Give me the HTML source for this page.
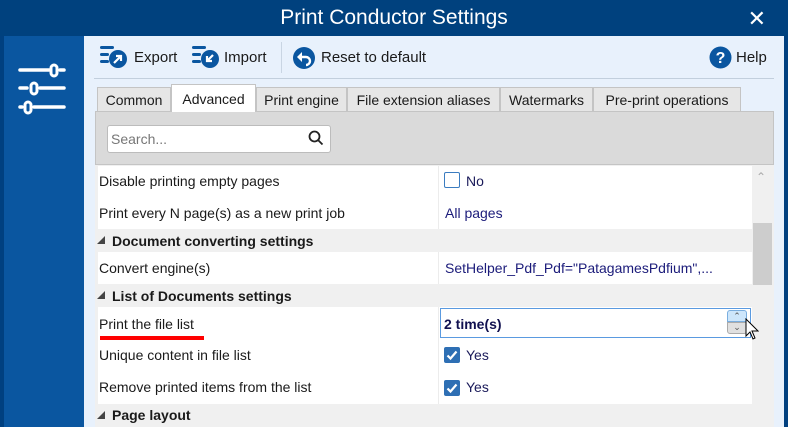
<!DOCTYPE html>
<html><head><style>
*{margin:0;padding:0;box-sizing:border-box}
body{width:788px;height:427px;overflow:hidden;background:#004080;font-family:"Liberation Sans",sans-serif;font-size:14px;color:#1a1a1a;position:relative}
.abs{position:absolute}
.title{left:0;top:0;width:788px;height:36px;background:#00417e;color:#fff;font-size:21px;text-align:center;line-height:36px}
.side{left:4px;top:36px;width:80px;height:391px;background:#0a56a0}
.content{left:84px;top:36px;width:700px;height:391px;background:#e8f1fc}
.tb{font-size:15px;color:#1a1a1a}
.tab{top:87px;height:25px;background:#e6e6e6;border:1px solid #c4c4c4;border-bottom:none;font-size:14px;line-height:24px;text-align:center}
.row{left:95px;width:657px;background:#fff}
.cat{left:95px;width:657px;background:#f0f0f0;font-weight:bold;font-size:14px}
.lbl{left:99px;font-size:14px}
.val{left:445px;font-size:14px;color:#1b1b7a}
.vd{left:438px;width:1px;background:#ececec}
.tri{left:97px;width:0;height:0;border-left:8px solid transparent;border-bottom:8px solid #444}
.cb{width:16px;height:16px;border-radius:2px;background:#2e6fb4}
</style></head><body>
<div class="abs title">Print Conductor Settings</div>
<div class="abs" style="right:22px;top:6px;color:#fff;font-size:22px">✕</div>
<div class="abs side">
<svg class="abs" style="left:12px;top:26px" width="56" height="56" viewBox="0 0 56 56" fill="none" stroke="#fff" stroke-width="3.5" stroke-linecap="round">
<line x1="4" y1="8" x2="33" y2="8"/><rect x="35" y="3" width="6" height="11" rx="3" stroke-width="3"/><line x1="44" y1="8" x2="48" y2="8"/>
<line x1="4" y1="26" x2="11" y2="26"/><rect x="15" y="21" width="6" height="11" rx="3" stroke-width="3"/><line x1="24" y1="26" x2="48" y2="26"/>
<line x1="4" y1="45" x2="6" y2="45"/><rect x="9" y="40" width="6" height="11" rx="3" stroke-width="3"/><line x1="18" y1="45" x2="48" y2="45"/>
</svg></div>
<div class="abs content"></div>
<!-- toolbar -->
<svg class="abs" style="left:100px;top:45px" width="28" height="24" viewBox="0 0 28 24"><g fill="#0a56a0"><rect x="0" y="1" width="14" height="3" rx="1.5"/><rect x="0" y="8" width="9" height="3" rx="1.5"/><rect x="0" y="15" width="9" height="3" rx="1.5"/><circle cx="18" cy="14" r="9"/></g><path d="M14 18l7-7M16 11h5v5" stroke="#fff" stroke-width="2.2" fill="none"/></svg>
<div class="abs tb" style="left:134px;top:49px">Export</div>
<svg class="abs" style="left:192px;top:45px" width="28" height="24" viewBox="0 0 28 24"><g fill="#0a56a0"><rect x="0" y="1" width="14" height="3" rx="1.5"/><rect x="0" y="8" width="9" height="3" rx="1.5"/><rect x="0" y="15" width="9" height="3" rx="1.5"/><circle cx="18" cy="14" r="9"/></g><path d="M21 10l-6 6M15 11v5h5" stroke="#fff" stroke-width="2.2" fill="none"/></svg>
<div class="abs tb" style="left:224px;top:49px">Import</div>
<div class="abs" style="left:281px;top:42px;width:1px;height:31px;background:#c9d5e3"></div>
<svg class="abs" style="left:292px;top:46px" width="24" height="24" viewBox="0 0 24 24"><circle cx="12" cy="12" r="11" fill="#0a56a0"/><path d="M8 11h6a4 4 0 0 1 0 8" stroke="#fff" stroke-width="2.4" fill="none"/><path d="M5 11l5-5v10z" fill="#fff"/></svg>
<div class="abs tb" style="left:321px;top:49px">Reset to default</div>
<svg class="abs" style="left:709px;top:46px" width="23" height="23" viewBox="0 0 23 23"><circle cx="11.5" cy="11.5" r="11" fill="#0a56a0"/><text x="11.5" y="17" fill="#fff" font-family="Liberation Sans" font-weight="bold" font-size="16" text-anchor="middle">?</text></svg>
<div class="abs tb" style="left:736px;top:49px">Help</div>
<div class="abs" style="left:94px;top:78px;width:680px;height:1px;background:#c2cfdd"></div>
<!-- tabs -->
<div class="abs tab" style="left:97px;width:74px">Common</div>
<div class="abs tab" style="left:171px;top:84px;height:28px;width:85px;background:#fff;line-height:28px;z-index:2">Advanced</div>
<div class="abs tab" style="left:256px;width:91px">Print engine</div>
<div class="abs tab" style="left:347px;width:153px">File extension aliases</div>
<div class="abs tab" style="left:500px;width:93px">Watermarks</div>
<div class="abs tab" style="left:593px;width:148px">Pre-print operations</div>
<div class="abs" style="left:95px;top:111px;width:679px;height:54px;background:#dadada;border:1px solid #c4c4c4"></div>
<div class="abs" style="left:107px;top:125px;width:224px;height:28px;background:#fff;border:1px solid #bcbcbc;border-radius:3px;color:#777;font-size:14px;line-height:26px;padding-left:3px">Search...</div>
<svg class="abs" style="left:308px;top:130px" width="16" height="16" viewBox="0 0 16 16" fill="none" stroke="#222" stroke-width="1.8"><circle cx="6.5" cy="6.5" r="5"/><line x1="10" y1="10" x2="14.5" y2="14.5"/></svg>
<!-- grid -->
<div class="abs" style="left:95px;top:165px;width:679px;height:262px;background:#f0f0f0"></div>
<div class="abs" style="left:752px;top:165px;width:21px;height:262px;background:#f0f0f0"></div>
<div class="abs" style="left:753px;top:223px;width:19px;height:62px;background:#cdcdcd"></div>
<div class="abs" style="left:756px;top:170px;color:#aaa;font-size:12px">&#8963;</div>
<div class="abs row" style="left:98px;width:654px;top:166px;height:63px"></div>
<div class="abs row" style="left:98px;width:654px;top:252px;height:32px"></div>
<div class="abs row" style="left:98px;width:654px;top:307px;height:97px"></div>
<div class="abs vd" style="top:166px;height:63px"></div>
<div class="abs vd" style="top:252px;height:32px"></div>
<div class="abs vd" style="top:307px;height:97px"></div>
<div class="abs lbl" style="top:173px">Disable printing empty pages</div>
<div class="abs lbl" style="top:205px">Print every N page(s) as a new print job</div>
<div class="abs tri" style="top:236px"></div><div class="abs lbl" style="left:112px;top:233px;font-weight:bold">Document converting settings</div>
<div class="abs lbl" style="top:260px">Convert engine(s)</div>
<div class="abs tri" style="top:291px"></div><div class="abs lbl" style="left:112px;top:288px;font-weight:bold">List of Documents settings</div>
<div class="abs lbl" style="top:316px">Print the file list</div>
<div class="abs" style="left:100px;top:336px;width:104px;height:4px;background:#f00"></div>
<div class="abs lbl" style="top:347px">Unique content in file list</div>
<div class="abs lbl" style="top:379px">Remove printed items from the list</div>
<div class="abs tri" style="top:411px"></div><div class="abs lbl" style="left:112px;top:407px;font-weight:bold">Page layout</div>
<div class="abs" style="left:444px;top:172px;width:16px;height:16px;border:1.5px solid #3b7cc0;border-radius:2px;background:#fff"></div>
<div class="abs val" style="left:466px;top:173px;color:#1a1a5a">No</div>
<div class="abs val" style="top:205px">All pages</div>
<div class="abs val" style="top:260px">SetHelper_Pdf_Pdf="PatagamesPdfium",...</div>
<div class="abs" style="left:440px;top:308px;width:311px;height:30px;border:1px solid #5a9ae0;background:#fff"></div>
<div class="abs val" style="left:444px;top:316px;font-weight:bold;color:#111150">2 time(s)</div>
<div class="abs" style="left:727px;top:310px;width:20px;height:12px;background:#cde6fb;border:1px solid #7aaedf;border-radius:3px 3px 0 0;font-size:9px;text-align:center;line-height:11px;color:#555">&#8963;</div>
<div class="abs" style="left:727px;top:322px;width:20px;height:12px;background:#e0e0e0;border:1px solid #aaa;border-radius:0 0 3px 3px;font-size:9px;text-align:center;line-height:8px;color:#555">&#8964;</div>
<svg class="abs" style="left:745px;top:318px" width="14" height="22" viewBox="0 0 14 22"><path d="M1 1v17l4-4 3 7 2-1-3-7h6z" fill="#fff" stroke="#000" stroke-width="1"/></svg>
<div class="abs cb" style="left:444px;top:347px"></div>
<svg class="abs" style="left:444px;top:347px" width="16" height="16"><path d="M3.5 8.5l3 3 6-7" stroke="#fff" stroke-width="2.2" fill="none"/></svg>
<div class="abs val" style="left:466px;top:347px;color:#1a1a5a">Yes</div>
<div class="abs cb" style="left:444px;top:380px"></div>
<svg class="abs" style="left:444px;top:380px" width="16" height="16"><path d="M3.5 8.5l3 3 6-7" stroke="#fff" stroke-width="2.2" fill="none"/></svg>
<div class="abs val" style="left:466px;top:379px;color:#1a1a5a">Yes</div>
</body></html>
